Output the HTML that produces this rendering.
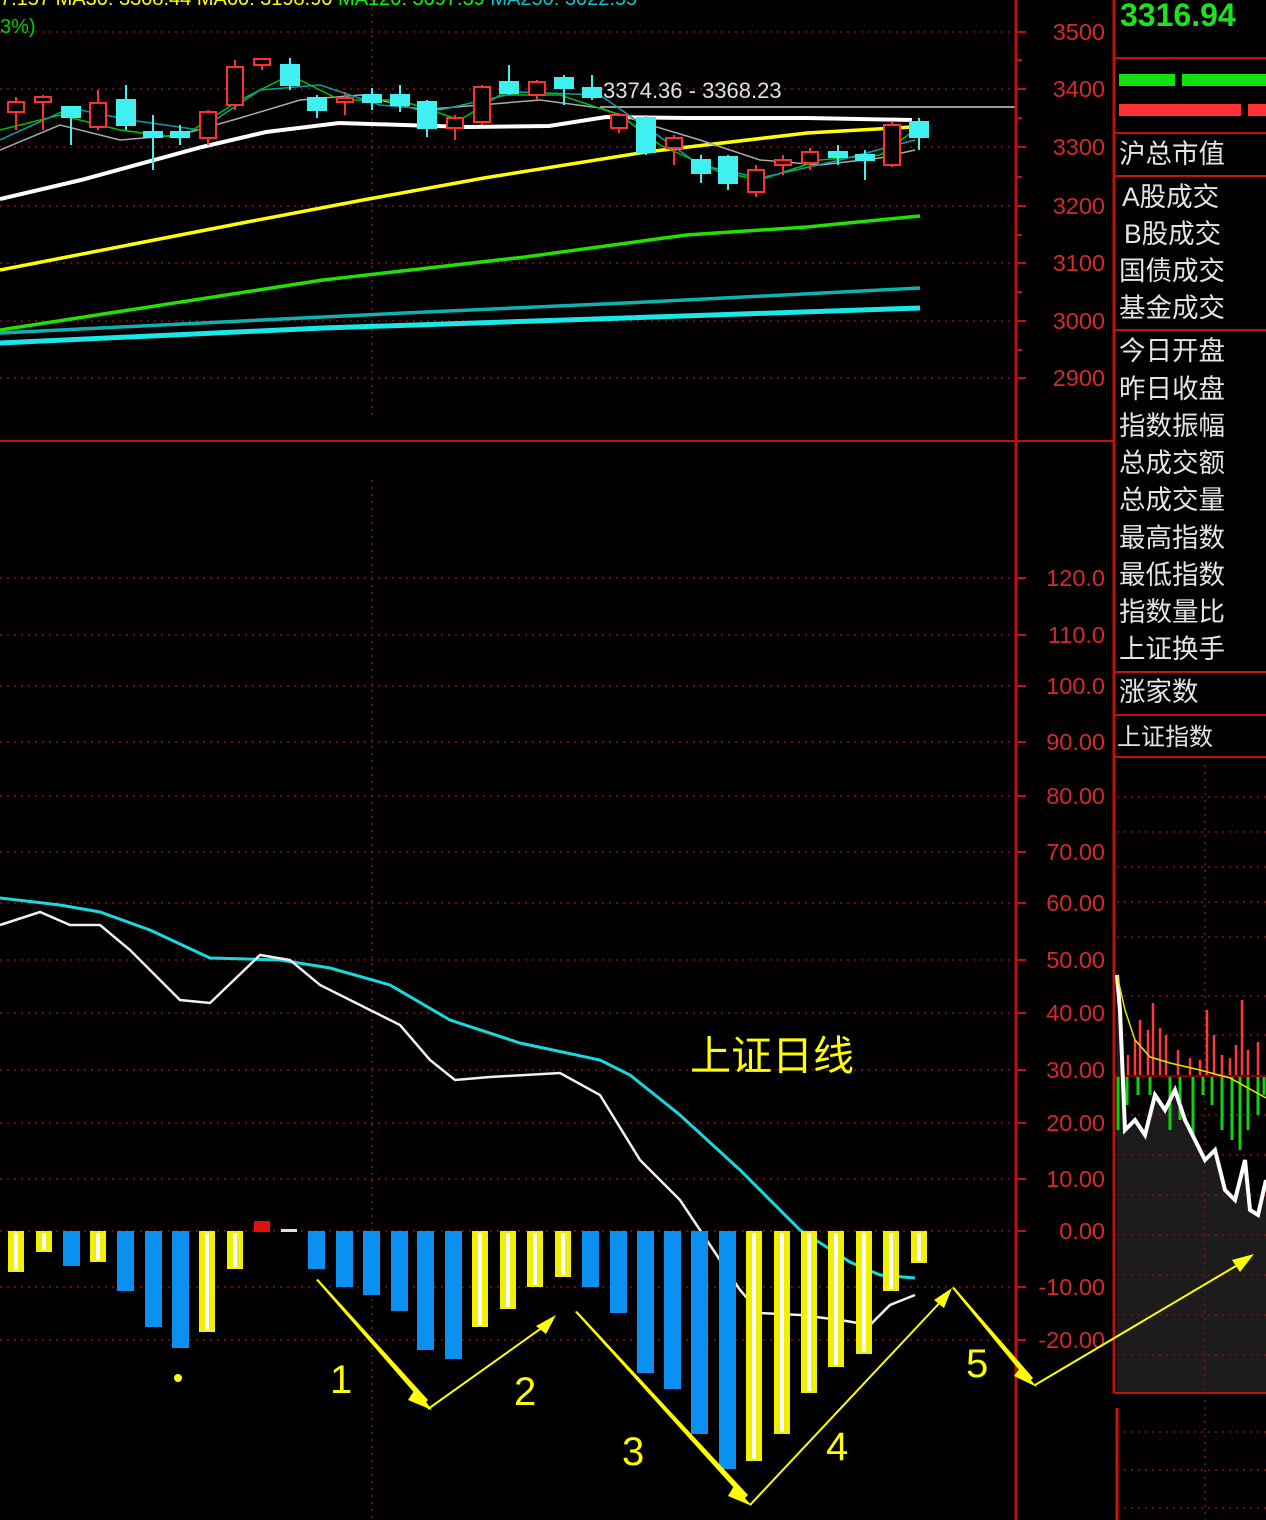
<!DOCTYPE html>
<html><head><meta charset="utf-8"><style>
html,body{margin:0;padding:0;background:#000;width:1266px;height:1520px;overflow:hidden}
svg{display:block}
.ax{font-family:"Liberation Sans",sans-serif;font-size:23.5px;fill:#d42a2a}
.rp{font-family:"Liberation Sans","Noto Sans CJK SC",sans-serif;font-size:26.5px;fill:#e4e4e4}
.num{font-family:"Liberation Sans",sans-serif;font-size:40px;fill:#ffff00}
</style></head><body>
<svg width="1266" height="1520" viewBox="0 0 1266 1520" xmlns="http://www.w3.org/2000/svg">
<rect width="1266" height="1520" fill="#000"/>
<g stroke="#8a1010" stroke-width="1.5" stroke-dasharray="2,5">
<line x1="0" y1="32" x2="1015" y2="32"/><line x1="0" y1="89" x2="1015" y2="89"/><line x1="0" y1="147" x2="1015" y2="147"/><line x1="0" y1="206" x2="1015" y2="206"/><line x1="0" y1="263" x2="1015" y2="263"/><line x1="0" y1="321" x2="1015" y2="321"/><line x1="0" y1="378" x2="1015" y2="378"/>
<line x1="372" y1="0" x2="372" y2="420"/>
<line x1="372" y1="480" x2="372" y2="1520"/>
<line x1="0" y1="578" x2="1015" y2="578"/><line x1="0" y1="635" x2="1015" y2="635"/><line x1="0" y1="686" x2="1015" y2="686"/><line x1="0" y1="742" x2="1015" y2="742"/><line x1="0" y1="796" x2="1015" y2="796"/><line x1="0" y1="852" x2="1015" y2="852"/><line x1="0" y1="903" x2="1015" y2="903"/><line x1="0" y1="960" x2="1015" y2="960"/><line x1="0" y1="1013" x2="1015" y2="1013"/><line x1="0" y1="1070" x2="1015" y2="1070"/><line x1="0" y1="1123" x2="1015" y2="1123"/><line x1="0" y1="1179" x2="1015" y2="1179"/><line x1="0" y1="1231" x2="1015" y2="1231"/><line x1="0" y1="1287" x2="1015" y2="1287"/><line x1="0" y1="1340" x2="1015" y2="1340"/>
</g>
<text x="0" y="5" font-family="Liberation Sans" font-size="20" fill="#ffff00">7.157  MA30: 3308.44  MA60: 3198.90  <tspan fill="#00ff00">MA120: 3097.39</tspan>  <tspan fill="#00c8c8">MA250: 3022.55</tspan></text>
<text x="0" y="33" font-family="Liberation Sans" font-size="20" fill="#00d000">3%)</text>
<polyline fill="none" stroke="#19e8e8" stroke-width="5" points="0,343 323,328 565,320 920,308"/>
<polyline fill="none" stroke="#0fb0b0" stroke-width="3.5" points="0,333 404,313 646,302 920,288"/>
<polyline fill="none" stroke="#22e000" stroke-width="3.5" points="0,330 323,280 525,257 686,235 807,227 920,216"/>
<polyline fill="none" stroke="#ffff00" stroke-width="3.5" points="0,270 242,223 363,200 484,178 646,152 807,133 912,127"/>
<polyline fill="none" stroke="#ffffff" stroke-width="4" points="0,199 81,180 202,147 266,132 339,123 404,125 468,127 549,126 606,117 686,118 807,118 912,120"/>
<line x1="600" y1="107" x2="1015" y2="107" stroke="#9a9a9a" stroke-width="2"/>
<polyline fill="none" stroke="#aaaaaa" stroke-width="1.5" points="0,150 60,125 120,140 180,135 240,118 300,100 360,95 420,110 480,105 540,100 600,108 650,125 700,140 760,160 820,165 880,158 915,150"/>
<polyline fill="none" stroke="#00c000" stroke-width="1.5" points="0,130 60,115 120,130 180,138 240,100 290,75 340,100 400,100 460,120 500,95 560,95 620,115 660,145 720,172 760,180 820,160 880,155 915,130"/>
<polyline fill="none" stroke="#0aa0a0" stroke-width="1.5" points="0,140 70,108 130,120 200,130 260,90 320,85 380,105 440,110 520,92 600,95 650,130 700,165 760,178 840,160 915,140"/>
<text x="603" y="98" font-family="Liberation Sans" font-size="22" fill="#e0e0e0">3374.36 - 3368.23</text>
<g stroke-width="2">
<g stroke="#ff3030" fill="#000">
<line x1="16" y1="97" x2="16" y2="130"/><rect x="8" y="102" width="16" height="10"/>
<line x1="43" y1="95" x2="43" y2="130"/><rect x="35" y="97" width="16" height="5"/>
<line x1="98" y1="90" x2="98" y2="130"/><rect x="90" y="103" width="16" height="24"/>
<line x1="208" y1="110" x2="208" y2="145"/><rect x="200" y="112" width="16" height="26"/>
<line x1="235" y1="60" x2="235" y2="110"/><rect x="227" y="67" width="16" height="38"/>
<line x1="262" y1="58" x2="262" y2="70"/><rect x="254" y="59" width="16" height="6"/>
<line x1="345" y1="92" x2="345" y2="115"/><rect x="337" y="98" width="16" height="4"/>
<line x1="455" y1="115" x2="455" y2="140"/><rect x="447" y="118" width="16" height="10"/>
<line x1="482" y1="85" x2="482" y2="125"/><rect x="474" y="87" width="16" height="35"/>
<line x1="537" y1="80" x2="537" y2="100"/><rect x="529" y="82" width="16" height="13"/>
<line x1="619" y1="113" x2="619" y2="133"/><rect x="611" y="115" width="16" height="13"/>
<line x1="674" y1="135" x2="674" y2="165"/><rect x="666" y="138" width="16" height="10"/>
<line x1="756" y1="165" x2="756" y2="197"/><rect x="748" y="170" width="16" height="22"/>
<line x1="783" y1="155" x2="783" y2="175"/><rect x="775" y="160" width="16" height="5"/>
<line x1="810" y1="148" x2="810" y2="170"/><rect x="802" y="152" width="16" height="11"/>
<line x1="892" y1="122" x2="892" y2="167"/><rect x="884" y="125" width="16" height="40"/>
</g>
<g stroke="#40f0f0" fill="#40f0f0">
<line x1="71" y1="107" x2="71" y2="145"/><rect x="62" y="107" width="18" height="10"/>
<line x1="126" y1="85" x2="126" y2="130"/><rect x="117" y="100" width="18" height="25"/>
<line x1="153" y1="115" x2="153" y2="170"/><rect x="144" y="132" width="18" height="5"/>
<line x1="180" y1="125" x2="180" y2="145"/><rect x="171" y="132" width="18" height="5"/>
<line x1="290" y1="58" x2="290" y2="90"/><rect x="281" y="65" width="18" height="20"/>
<line x1="317" y1="95" x2="317" y2="118"/><rect x="308" y="98" width="18" height="12"/>
<line x1="372" y1="88" x2="372" y2="110"/><rect x="363" y="95" width="18" height="7"/>
<line x1="400" y1="85" x2="400" y2="112"/><rect x="391" y="95" width="18" height="10"/>
<line x1="427" y1="100" x2="427" y2="137"/><rect x="418" y="102" width="18" height="26"/>
<line x1="509" y1="65" x2="509" y2="95"/><rect x="500" y="82" width="18" height="11"/>
<line x1="564" y1="75" x2="564" y2="105"/><rect x="555" y="78" width="18" height="10"/>
<line x1="592" y1="75" x2="592" y2="100"/><rect x="583" y="88" width="18" height="9"/>
<line x1="646" y1="115" x2="646" y2="155"/><rect x="637" y="118" width="18" height="34"/>
<line x1="701" y1="155" x2="701" y2="183"/><rect x="692" y="160" width="18" height="13"/>
<line x1="728" y1="155" x2="728" y2="190"/><rect x="719" y="157" width="18" height="26"/>
<line x1="838" y1="145" x2="838" y2="165"/><rect x="829" y="152" width="18" height="5"/>
<line x1="865" y1="150" x2="865" y2="180"/><rect x="856" y="155" width="18" height="5"/>
<line x1="919" y1="118" x2="919" y2="150"/><rect x="910" y="122" width="18" height="15"/>
</g>
</g>
<line x1="0" y1="441" x2="1113" y2="441" stroke="#c01010" stroke-width="2"/>
<line x1="1016" y1="0" x2="1016" y2="1520" stroke="#c01010" stroke-width="3"/>
<line x1="1114" y1="0" x2="1114" y2="1393" stroke="#c01010" stroke-width="3"/>
<g stroke="#c01010" stroke-width="2">
<line x1="1017" y1="32" x2="1026" y2="32"/><line x1="1017" y1="60" x2="1022" y2="60"/><line x1="1017" y1="89" x2="1026" y2="89"/><line x1="1017" y1="118" x2="1022" y2="118"/><line x1="1017" y1="147" x2="1026" y2="147"/><line x1="1017" y1="177" x2="1022" y2="177"/><line x1="1017" y1="206" x2="1026" y2="206"/><line x1="1017" y1="235" x2="1022" y2="235"/><line x1="1017" y1="263" x2="1026" y2="263"/><line x1="1017" y1="292" x2="1022" y2="292"/><line x1="1017" y1="321" x2="1026" y2="321"/><line x1="1017" y1="350" x2="1022" y2="350"/><line x1="1017" y1="378" x2="1026" y2="378"/>
<line x1="1017" y1="578" x2="1026" y2="578"/><line x1="1017" y1="635" x2="1026" y2="635"/><line x1="1017" y1="686" x2="1026" y2="686"/><line x1="1017" y1="742" x2="1026" y2="742"/><line x1="1017" y1="796" x2="1026" y2="796"/><line x1="1017" y1="852" x2="1026" y2="852"/><line x1="1017" y1="903" x2="1026" y2="903"/><line x1="1017" y1="960" x2="1026" y2="960"/><line x1="1017" y1="1013" x2="1026" y2="1013"/><line x1="1017" y1="1070" x2="1026" y2="1070"/><line x1="1017" y1="1123" x2="1026" y2="1123"/><line x1="1017" y1="1179" x2="1026" y2="1179"/><line x1="1017" y1="1231" x2="1026" y2="1231"/><line x1="1017" y1="1287" x2="1026" y2="1287"/><line x1="1017" y1="1340" x2="1026" y2="1340"/>
</g>
<g class="ax" text-anchor="end">
<text x="1105" y="40">3500</text><text x="1105" y="97">3400</text><text x="1105" y="155">3300</text><text x="1105" y="214">3200</text><text x="1105" y="271">3100</text><text x="1105" y="329">3000</text><text x="1105" y="386">2900</text>
<text x="1105" y="586">120.0</text><text x="1105" y="643">110.0</text><text x="1105" y="694">100.0</text><text x="1105" y="750">90.00</text><text x="1105" y="804">80.00</text><text x="1105" y="860">70.00</text><text x="1105" y="911">60.00</text><text x="1105" y="968">50.00</text><text x="1105" y="1021">40.00</text><text x="1105" y="1078">30.00</text><text x="1105" y="1131">20.00</text><text x="1105" y="1187">10.00</text><text x="1105" y="1239">0.00</text><text x="1105" y="1295">-10.00</text><text x="1105" y="1348">-20.00</text>
</g>
<text x="1120" y="26" font-family="Liberation Sans" font-size="32" font-weight="bold" fill="#20e020">3316.94</text>
<g stroke="#c01010" stroke-width="2">
<line x1="1114" y1="58" x2="1266" y2="58"/><line x1="1114" y1="133" x2="1266" y2="133"/><line x1="1114" y1="176" x2="1266" y2="176"/><line x1="1114" y1="330" x2="1266" y2="330"/><line x1="1114" y1="672" x2="1266" y2="672"/><line x1="1114" y1="715" x2="1266" y2="715"/><line x1="1114" y1="757" x2="1266" y2="757"/>
</g>
<rect x="1119" y="74" width="56" height="12" fill="#10e010"/><rect x="1182" y="74" width="84" height="12" fill="#10e010"/>
<rect x="1119" y="104" width="122" height="12" fill="#ff3030"/><rect x="1248" y="104" width="18" height="12" fill="#ff3030"/>
<g class="rp">
<text x="1119" y="163">沪总市值</text>
<text x="1122" y="206">A股成交</text><text x="1124" y="243">B股成交</text><text x="1119" y="280">国债成交</text><text x="1119" y="317">基金成交</text>
<text x="1119" y="360">今日开盘</text><text x="1119" y="398">昨日收盘</text><text x="1119" y="435">指数振幅</text><text x="1119" y="472">总成交额</text><text x="1119" y="509">总成交量</text><text x="1119" y="547">最高指数</text><text x="1119" y="584">最低指数</text><text x="1119" y="621">指数量比</text><text x="1119" y="658">上证换手</text>
<text x="1119" y="701">涨家数</text><text x="1117" y="745" font-size="24">上证指数</text>
</g>
<polygon fill="#1c1c1c" points="1117,975 1120,1010 1125,1130 1135,1120 1145,1135 1155,1095 1165,1110 1175,1090 1185,1120 1195,1140 1205,1160 1215,1150 1225,1190 1235,1200 1245,1160 1250,1210 1258,1215 1266,1180 1266,1393 1117,1393"/>
<g stroke="#8a1010" stroke-width="1.5" stroke-dasharray="2,5">
<line x1="1117" y1="996" x2="1266" y2="996"/><line x1="1117" y1="1035" x2="1266" y2="1035"/><line x1="1117" y1="1115" x2="1266" y2="1115"/><line x1="1117" y1="1155" x2="1266" y2="1155"/><line x1="1117" y1="1195" x2="1266" y2="1195"/><line x1="1117" y1="1235" x2="1266" y2="1235"/><line x1="1117" y1="1275" x2="1266" y2="1275"/><line x1="1117" y1="1315" x2="1266" y2="1315"/><line x1="1117" y1="1355" x2="1266" y2="1355"/>
<line x1="1117" y1="797" x2="1266" y2="797"/><line x1="1117" y1="832" x2="1266" y2="832"/><line x1="1117" y1="867" x2="1266" y2="867"/><line x1="1117" y1="902" x2="1266" y2="902"/><line x1="1117" y1="937" x2="1266" y2="937"/>
<line x1="1205" y1="765" x2="1205" y2="1393"/><line x1="1205" y1="1400" x2="1205" y2="1520"/>
<line x1="1117" y1="1432" x2="1266" y2="1432"/><line x1="1117" y1="1470" x2="1266" y2="1470"/><line x1="1117" y1="1508" x2="1266" y2="1508"/>
</g>
<g stroke="#ff3838" stroke-width="2.5">
<line x1="1128" y1="1076" x2="1128" y2="1055"/><line x1="1135" y1="1076" x2="1135" y2="1040"/><line x1="1140" y1="1076" x2="1140" y2="1020"/><line x1="1148" y1="1076" x2="1148" y2="1030"/><line x1="1153" y1="1076" x2="1153" y2="1003"/><line x1="1160" y1="1076" x2="1160" y2="1028"/><line x1="1166" y1="1076" x2="1166" y2="1035"/><line x1="1178" y1="1076" x2="1178" y2="1050"/><line x1="1190" y1="1076" x2="1190" y2="1058"/><line x1="1200" y1="1076" x2="1200" y2="1060"/><line x1="1207" y1="1076" x2="1207" y2="1010"/><line x1="1214" y1="1076" x2="1214" y2="1035"/><line x1="1222" y1="1076" x2="1222" y2="1055"/><line x1="1230" y1="1076" x2="1230" y2="1058"/><line x1="1236" y1="1076" x2="1236" y2="1045"/><line x1="1242" y1="1076" x2="1242" y2="1000"/><line x1="1248" y1="1076" x2="1248" y2="1050"/><line x1="1258" y1="1076" x2="1258" y2="1042"/>
</g>
<g stroke="#10d010" stroke-width="3">
<line x1="1118" y1="1076" x2="1118" y2="1130"/><line x1="1127" y1="1076" x2="1127" y2="1105"/><line x1="1138" y1="1076" x2="1138" y2="1095"/><line x1="1150" y1="1076" x2="1150" y2="1095"/><line x1="1170" y1="1076" x2="1170" y2="1130"/><line x1="1180" y1="1076" x2="1180" y2="1120"/><line x1="1193" y1="1076" x2="1193" y2="1135"/><line x1="1203" y1="1076" x2="1203" y2="1095"/><line x1="1212" y1="1076" x2="1212" y2="1105"/><line x1="1222" y1="1076" x2="1222" y2="1130"/><line x1="1232" y1="1076" x2="1232" y2="1140"/><line x1="1240" y1="1076" x2="1240" y2="1150"/><line x1="1248" y1="1076" x2="1248" y2="1130"/><line x1="1258" y1="1076" x2="1258" y2="1115"/><line x1="1264" y1="1076" x2="1264" y2="1095"/>
</g>
<line x1="1116" y1="1076" x2="1266" y2="1076" stroke="#800000" stroke-width="2"/>
<polyline fill="none" stroke="#ffffff" stroke-width="4" points="1117,975 1120,1010 1125,1130 1135,1120 1145,1135 1155,1095 1165,1110 1175,1090 1185,1120 1195,1140 1205,1160 1215,1150 1225,1190 1235,1200 1245,1160 1250,1210 1258,1215 1266,1180"/>
<polyline fill="none" stroke="#e8e800" stroke-width="1.5" points="1117,975 1125,1010 1135,1040 1150,1057 1170,1063 1200,1070 1230,1078 1266,1098"/>
<line x1="1114" y1="1393" x2="1266" y2="1393" stroke="#c01010" stroke-width="2"/>
<line x1="1117" y1="1408" x2="1117" y2="1520" stroke="#d01010" stroke-width="3"/>
<polyline fill="none" stroke="#1ad8e0" stroke-width="3" points="0,898 60,905 100,912 150,930 210,958 280,960 330,968 390,985 450,1020 520,1043 600,1060 630,1075 680,1115 740,1170 800,1230 850,1262 880,1275 915,1278"/>
<polyline fill="none" stroke="#f0f0f0" stroke-width="2.5" points="0,925 40,912 70,925 100,925 130,950 180,1000 210,1003 260,955 290,960 320,985 370,1010 400,1025 430,1060 455,1080 490,1077 560,1073 600,1095 640,1160 680,1200 710,1245 740,1290 760,1313 800,1315 840,1320 870,1325 890,1305 915,1295"/>
<g fill="#0a90f0">
<rect x="63" y="1231" width="17" height="35"/><rect x="117" y="1231" width="17" height="60"/><rect x="145" y="1231" width="17" height="96"/><rect x="172" y="1231" width="17" height="117"/>
<rect x="308" y="1231" width="17" height="38"/><rect x="336" y="1231" width="17" height="56"/><rect x="363" y="1231" width="17" height="64"/><rect x="391" y="1231" width="17" height="80"/><rect x="417" y="1231" width="17" height="119"/><rect x="445" y="1231" width="17" height="128"/>
<rect x="582" y="1231" width="17" height="56"/><rect x="610" y="1231" width="17" height="82"/><rect x="637" y="1231" width="17" height="142"/><rect x="664" y="1231" width="17" height="158"/><rect x="691" y="1231" width="17" height="203"/><rect x="719" y="1231" width="17" height="238"/>
</g>
<g fill="#f0f000">
<rect x="8" y="1231" width="16" height="41"/><rect x="36" y="1231" width="16" height="21"/><rect x="90" y="1231" width="16" height="31"/><rect x="199" y="1231" width="16" height="101"/><rect x="227" y="1231" width="16" height="38"/>
<rect x="472" y="1231" width="16" height="96"/><rect x="500" y="1231" width="16" height="78"/><rect x="527" y="1231" width="16" height="56"/><rect x="555" y="1231" width="16" height="46"/>
<rect x="746" y="1231" width="16" height="230"/><rect x="774" y="1231" width="16" height="203"/><rect x="801" y="1231" width="16" height="162"/><rect x="828" y="1231" width="16" height="136"/><rect x="856" y="1231" width="16" height="123"/><rect x="883" y="1231" width="16" height="60"/><rect x="911" y="1231" width="16" height="32"/>
</g>
<g fill="#ffffff">
<rect x="14" y="1233" width="4" height="37"/><rect x="42" y="1233" width="4" height="17"/><rect x="96" y="1233" width="4" height="27"/><rect x="205" y="1233" width="4" height="97"/><rect x="233" y="1233" width="4" height="34"/>
<rect x="478" y="1233" width="4" height="92"/><rect x="506" y="1233" width="4" height="74"/><rect x="533" y="1233" width="4" height="52"/><rect x="561" y="1233" width="4" height="42"/>
<rect x="752" y="1233" width="4" height="226"/><rect x="780" y="1233" width="4" height="199"/><rect x="807" y="1233" width="4" height="158"/><rect x="834" y="1233" width="4" height="132"/><rect x="862" y="1233" width="4" height="119"/><rect x="889" y="1233" width="4" height="56"/><rect x="917" y="1233" width="4" height="28"/>
</g>
<rect x="254" y="1221" width="16" height="11" fill="#e01010"/>
<rect x="281" y="1229" width="16" height="3" fill="#e0e0e0"/>
<circle cx="178" cy="1378" r="4" fill="#ffff00"/>
<g fill="#ffff00" stroke="#ffff00">
<polygon stroke-width="0" points="316,1280 318,1279 428,1400 424,1404"/><polygon stroke-width="0" points="416,1388 432,1410 408,1400"/>
<line x1="428" y1="1409" x2="550" y2="1322" stroke-width="2"/><polygon stroke-width="0" points="556,1315 536,1326 546,1334"/>
<polygon stroke-width="0" points="575,1312 577,1311 748,1495 744,1499"/><polygon stroke-width="0" points="734,1486 752,1506 728,1496"/>
<line x1="750" y1="1505" x2="946" y2="1296" stroke-width="2"/><polygon stroke-width="0" points="952,1288 934,1300 944,1308"/>
<polygon stroke-width="0" points="952,1288 954,1287 1033,1378 1029,1382"/><polygon stroke-width="0" points="1020,1368 1037,1387 1014,1376"/>
<line x1="1035" y1="1385" x2="1246" y2="1260" stroke-width="2"/><polygon stroke-width="0" points="1254,1254 1232,1260 1240,1272"/>
</g>
<g class="num">
<text x="330" y="1393">1</text><text x="514" y="1405">2</text><text x="622" y="1465">3</text><text x="826" y="1460">4</text><text x="966" y="1377">5</text>
</g>
<text x="690" y="1070" font-family="Liberation Sans,'Noto Sans CJK SC',sans-serif" font-size="41" fill="#ffff00">上证日线</text>
</svg>
</body></html>
